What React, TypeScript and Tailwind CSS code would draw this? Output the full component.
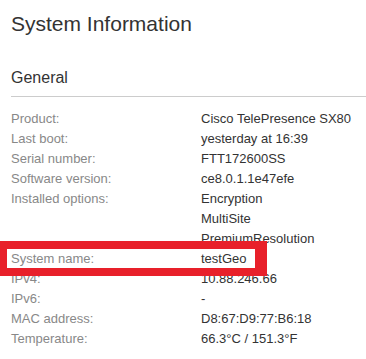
import React from "react";

const rows: [string, string[]][] = [
  ["Product:", ["Cisco TelePresence SX80"]],
  ["Last boot:", ["yesterday at 16:39"]],
  ["Serial number:", ["FTT172600SS"]],
  ["Software version:", ["ce8.0.1.1e47efe"]],
  ["Installed options:", ["Encryption", "MultiSite", "PremiumResolution"]],
  ["System name:", ["testGeo"]],
  ["IPv4:", ["10.88.246.66"]],
  ["IPv6:", ["-"]],
  ["MAC address:", ["D8:67:D9:77:B6:18"]],
  ["Temperature:", ["66.3°C / 151.3°F"]],
];

export default function App() {
  return (
    <div
      className="relative w-[366px] h-[359px] overflow-hidden bg-white"
      style={{ fontFamily: '"Liberation Sans", Arial, sans-serif' }}
    >
      <div className="pt-[12px] pl-[11px]">
        <h1 className="text-[21px] leading-[24px] text-[#333]">System Information</h1>
        <h2 className="mt-[32px] text-[16px] leading-[20px] text-[#333]">General</h2>
        <div className="mt-[8px] h-px bg-[#cccccc]" />
        <div className="mt-[12px] flex flex-col">
          {rows.map(([label, values]) => (
            <div key={label} className="flex text-[13px] leading-[20px]">
              <div className="w-[190px] text-[#888]">{label}</div>
              <div className="flex flex-col text-[#333]">
                {values.map((v) => (
                  <div key={v}>{v}</div>
                ))}
              </div>
            </div>
          ))}
        </div>
      </div>
      <div className="absolute left-[-4px] top-[241px] w-[271px] h-[35px] border-solid border-[#e8202a] border-t-[8px] border-b-[8px] border-l-[11px] border-r-[12px]" />
    </div>
  );
}
